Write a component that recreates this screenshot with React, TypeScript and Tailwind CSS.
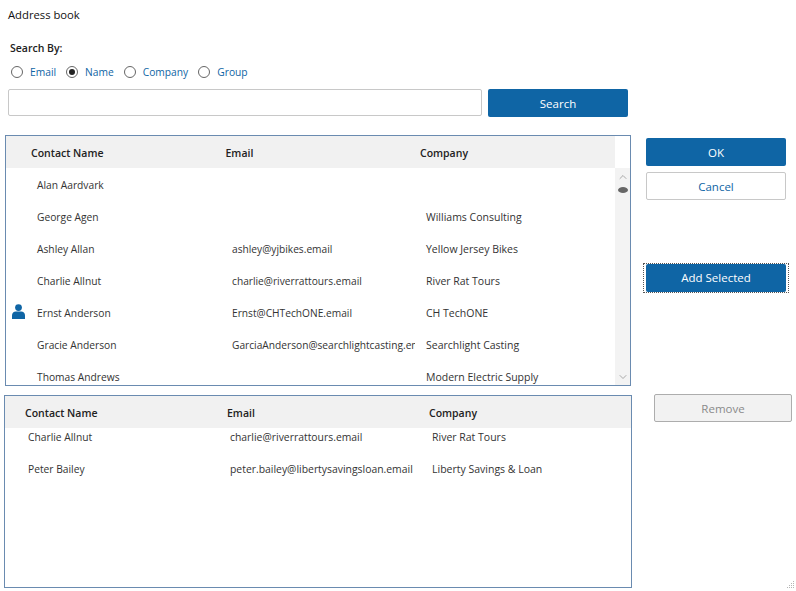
import React from "react";
import { ChevronDown, ChevronUp } from "lucide-react";

interface Contact {
  name: string;
  email?: string;
  company?: string;
  user?: boolean;
}

const contacts: Contact[] = [
  { name: "Alan Aardvark" },
  { name: "George Agen", company: "Williams Consulting" },
  { name: "Ashley Allan", email: "ashley@yjbikes.email", company: "Yellow Jersey Bikes" },
  { name: "Charlie Allnut", email: "charlie@riverrattours.email", company: "River Rat Tours" },
  { name: "Ernst Anderson", email: "Ernst@CHTechONE.email", company: "CH TechONE", user: true },
  { name: "Gracie Anderson", email: "GarciaAnderson@searchlightcasting.email", company: "Searchlight Casting" },
  { name: "Thomas Andrews", company: "Modern Electric Supply" },
];

const selected: Contact[] = [
  { name: "Charlie Allnut", email: "charlie@riverrattours.email", company: "River Rat Tours" },
  { name: "Peter Bailey", email: "peter.bailey@libertysavingsloan.email", company: "Liberty Savings & Loan" },
];

const UserIcon = () => (
  <svg width="13" height="15" viewBox="0 0 13 15" className="fill-[#0f65a5]">
    <circle cx="6.5" cy="3.6" r="3.4" />
    <path d="M0 15V11.2C0 8.8 1.8 7.4 3.8 7.4H9.2C11.2 7.4 13 8.8 13 11.2V15Z" />
  </svg>
);

const Radio = ({ label, checked }: { label: string; checked?: boolean }) => (
  <label className="flex items-center gap-[7px] text-[#0f65a5]">
    <span className="flex h-3 w-3 items-center justify-center rounded-full border border-[#666] bg-white">
      {checked && <span className="h-1.5 w-1.5 rounded-full bg-[#222]" />}
    </span>
    {label}
  </label>
);

export default function App() {
  return (
    <div className="relative flex h-[591px] w-[796px] flex-col overflow-hidden bg-white font-['Open_Sans',sans-serif] text-[10.5px] text-[#333]">
      <div className="h-[30px] pl-2 pt-[7px] text-[11.25px] leading-[15px] text-[#111]">Address book</div>

      <div className="pl-2.5 pt-2.5 font-semibold leading-[16px] text-[#222]">Search By:</div>

      <div className="mt-2 flex h-4 gap-[10px] pl-[11px] text-[10.25px] leading-4">
        <Radio label="Email" />
        <Radio label="Name" checked />
        <Radio label="Company" />
        <Radio label="Group" />
      </div>

      <div className="mt-[9px] flex h-7 gap-1.5 pl-2">
        <input className="h-[27px] w-[474px] rounded-[2px] border border-[#c8c8c8] bg-white" />
        <button className="w-[140px] rounded-[2px] bg-[#0f65a5] pt-px text-[11.5px] text-white">Search</button>
      </div>

      <div className="mt-[18px] flex h-[251px] pl-[5px]">
        <div className="flex h-full w-[626px] overflow-hidden border border-[#6a8bb0]">
          <div className="w-[609px] shrink-0">
            <div className="flex h-8 items-center bg-[#f1f1f1] pl-[25px] pt-1 font-semibold text-[#222]">
              <div className="w-[194.5px]">Contact Name</div>
              <div className="w-[194.5px]">Email</div>
              <div>Company</div>
            </div>
            {contacts.map((c) => (
              <div key={c.name} className="flex h-8 items-center whitespace-nowrap pt-1">
                <div className="mb-[5px] flex w-[31px] shrink-0 pl-[6px]">{c.user && <UserIcon />}</div>
                <div className="w-[195px] shrink-0 text-[10.25px]">{c.name}</div>
                <div className="mr-[11px] w-[183px] shrink-0 overflow-hidden text-[10.2px]">{c.email}</div>
                <div>{c.company}</div>
              </div>
            ))}
          </div>
          <div className="flex w-[15px] flex-col">
            <div className="h-8 shrink-0 bg-white" />
            <div className="relative flex flex-1 flex-col items-center justify-between bg-[#f3f3f3] pb-[2px] pt-[3px]">
              <ChevronUp size={12} strokeWidth={1.5} className="text-[#8f8f8f]" />
              <span className="absolute left-[3px] top-[19px] h-[6px] w-[10px] rounded-[50%] bg-[#666]" />
              <ChevronDown size={12} strokeWidth={1.5} className="text-[#8f8f8f]" />
            </div>
          </div>
        </div>

        <div className="flex flex-col pl-[15px] pt-[3px] text-[11.5px]">
          <button className="h-7 w-[140px] rounded-[2px] bg-[#0f65a5] pt-px text-white">OK</button>
          <button className="mt-1.5 h-7 w-[140px] rounded-[2px] border border-[#c8c8c8] bg-white pt-px text-[#0f65a5]">
            Cancel
          </button>
          <div className="mt-[63px] -ml-[3px] w-[146px] border border-dotted border-[#555] px-[2px]">
            <button className="block h-7 w-[140px] rounded-[2px] bg-[#0f65a5] text-white">Add Selected</button>
          </div>
        </div>
      </div>

      <div className="mt-[9px] flex h-[193px] items-start pl-1">
        <div className="h-full w-[628px] overflow-hidden border border-[#6a8bb0]">
          <div className="flex h-8 items-center bg-[#f1f1f1] pl-5 pt-1 font-semibold text-[#222]">
            <div className="w-[202px]">Contact Name</div>
            <div className="w-[202px]">Email</div>
            <div>Company</div>
          </div>
          {selected.map((c) => (
            <div key={c.name} className="flex h-8 items-start whitespace-nowrap pl-[23px] leading-[18px]">
              <div className="w-[202px] shrink-0 text-[10.25px]">{c.name}</div>
              <div className="w-[202px] shrink-0 text-[10.4px]">{c.email}</div>
              <div>{c.company}</div>
            </div>
          ))}
        </div>
        <button className="ml-[22px] -mt-px h-7 w-[138px] rounded-[2px] border border-[#adadad] bg-[#f2f2f2] pt-px text-[11.5px] text-[#8a8a8a]">
          Remove
        </button>
      </div>

      <svg width="11" height="11" viewBox="0 0 11 11" className="absolute bottom-0 right-0 fill-[#b5b5b5]">
        <rect x="8" y="1" width="1" height="1" />
        <rect x="6" y="3" width="1" height="1" />
        <rect x="8" y="3" width="1" height="1" />
        <rect x="4" y="5" width="1" height="1" />
        <rect x="6" y="5" width="1" height="1" />
        <rect x="8" y="5" width="1" height="1" />
        <rect x="2" y="7" width="1" height="1" />
        <rect x="4" y="7" width="1" height="1" />
        <rect x="6" y="7" width="1" height="1" />
        <rect x="8" y="7" width="1" height="1" />
      </svg>
    </div>
  );
}
